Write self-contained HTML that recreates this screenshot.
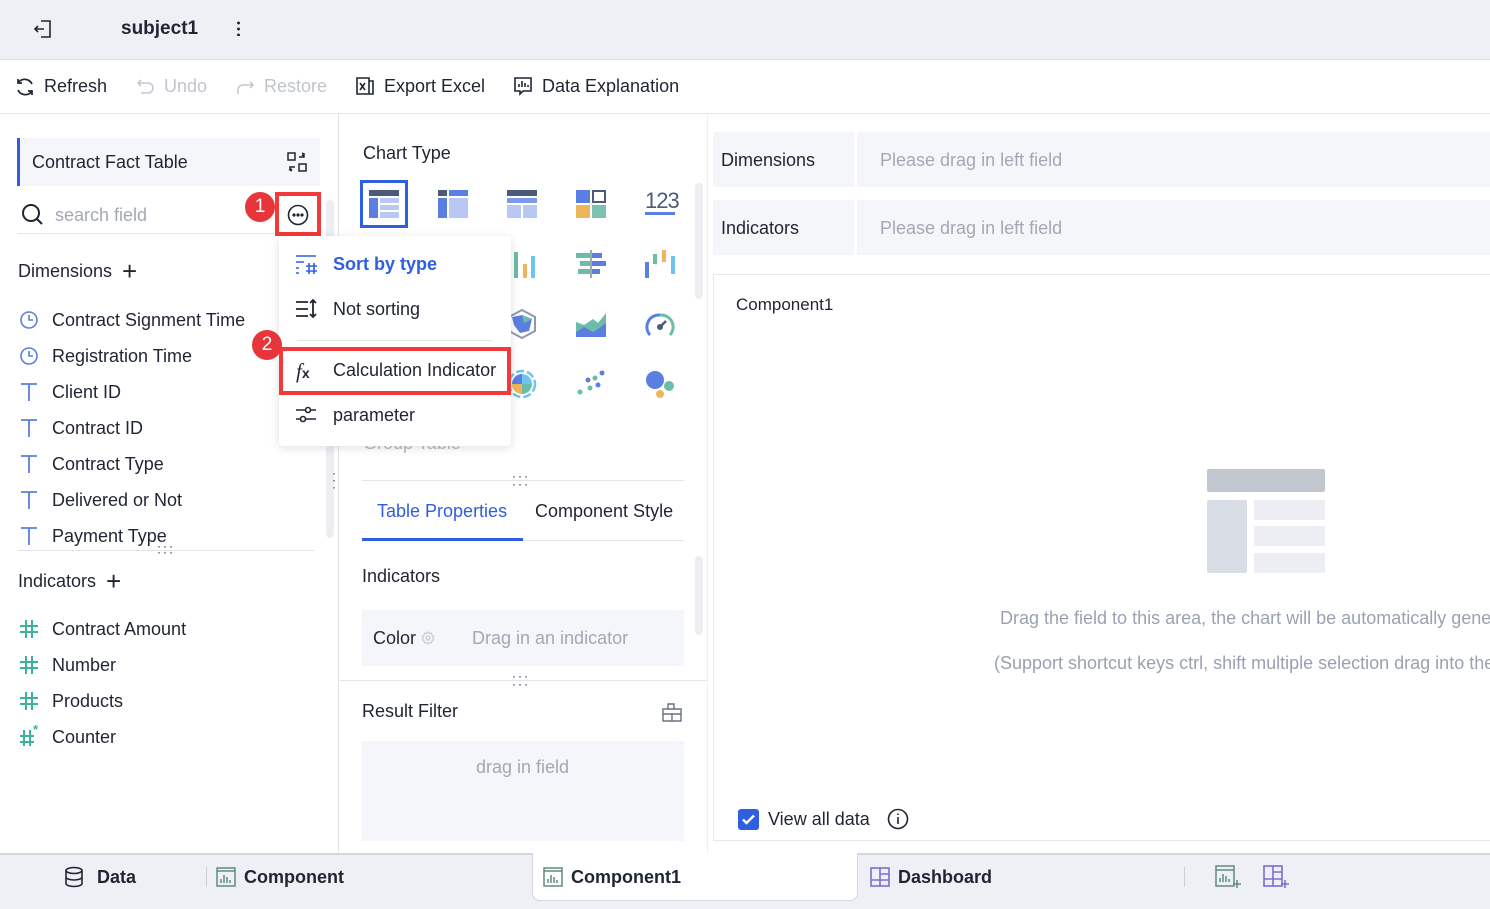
<!DOCTYPE html>
<html><head><meta charset="utf-8"><style>
*{box-sizing:border-box;margin:0;padding:0}
body{width:1490px;height:909px;overflow:hidden;position:relative;font-family:"Liberation Sans",sans-serif;color:#1f2533;background:#fff;font-size:17px}
.a{position:absolute}
.gray{color:#9aa1b0}
.ic{position:absolute;display:block}
.fld{position:absolute;left:52px;font-size:18px}
.T{position:absolute;left:19px;width:20px;height:20px}
.H{position:absolute;left:19px;color:#3bb39a;font-size:22px;font-weight:bold;line-height:22px}
</style></head><body>
<!-- top bar -->
<div class="a" style="left:0;top:0;width:1490px;height:60px;background:#eef0f5;border-bottom:1px solid #dde0e7"></div>
<svg class="ic" style="left:32px;top:18px" width="22" height="22" viewBox="0 0 22 22" fill="none" stroke="#1f2533" stroke-width="1.6"><path d="M9 3h9v16H9M3 11h9M6 8l-3 3 3 3"/></svg>
<div class="a" style="left:121px;top:18px;font-weight:bold;font-size:19px">subject1</div>
<div class="a" style="left:237px;top:20px;width:3px;height:16px;background:radial-gradient(circle,#1f2533 1.3px,transparent 1.6px) 0 0/3px 6px"></div>
<!-- toolbar -->
<div class="a" style="left:0;top:113px;width:1490px;height:1px;background:#e3e5ea"></div>
<svg class="ic" style="left:14px;top:76px" width="22" height="22" viewBox="0 0 22 22" fill="none" stroke="#1f2533" stroke-width="1.7"><path d="M18 8a8 8 0 0 0-14-1M4 14a8 8 0 0 0 14 1M4 3v4h4M18 19v-4h-4"/></svg>
<div class="a" style="left:44px;top:76px;font-size:18px">Refresh</div>
<svg class="ic" style="left:135px;top:76px" width="22" height="22" viewBox="0 0 22 22" fill="none" stroke="#c4c8d0" stroke-width="1.6"><path d="M6 4L3 7l3 3M3 7h10a5 5 0 0 1 0 10H6"/></svg>
<div class="a" style="left:164px;top:76px;font-size:18px;color:#c0c4cc">Undo</div>
<svg class="ic" style="left:234px;top:76px" width="22" height="22" viewBox="0 0 22 22" fill="none" stroke="#c4c8d0" stroke-width="1.6"><path d="M16 6l3 3-3 3M19 9H9a5 5 0 0 0-5 5v4"/></svg>
<div class="a" style="left:264px;top:76px;font-size:18px;color:#c0c4cc">Restore</div>
<svg class="ic" style="left:354px;top:75px" width="22" height="22" viewBox="0 0 22 22" fill="none" stroke="#1f2533" stroke-width="1.6"><path d="M3 3h12v16H3zM15 6h4v13h-4M6 8l5 7M11 8l-5 7"/></svg>
<div class="a" style="left:384px;top:76px;font-size:18px">Export Excel</div>
<svg class="ic" style="left:512px;top:75px" width="22" height="22" viewBox="0 0 22 22" fill="none" stroke="#1f2533" stroke-width="1.6"><path d="M3 3h16v13h-8l-3 3v-3H3zM7 12V9M10 12V6M13 12V8M16 12v-2"/></svg>
<div class="a" style="left:542px;top:76px;font-size:18px">Data Explanation</div>
<!-- left panel -->
<div class="a" style="left:338px;top:114px;width:1px;height:740px;background:#e3e5ea"></div>
<div class="a" style="left:17px;top:138px;width:303px;height:48px;background:#f5f6fa;border-left:3px solid #2f5ee0"></div>
<div class="a" style="left:32px;top:152px;font-size:18px">Contract Fact Table</div>
<svg class="ic" style="left:286px;top:151px" width="22" height="22" viewBox="0 0 22 22" fill="none" stroke="#1f2533" stroke-width="1.5"><path d="M2 2h7v7H2zM13 13h7v7h-7zM13 6h5V3M16 2l2 1-2 2M9 16H4v3M6 20l-2-1 2-1"/></svg>
<svg class="ic" style="left:21px;top:203px" width="24" height="24" viewBox="0 0 24 24" fill="none" stroke="#1f2533" stroke-width="2"><circle cx="10" cy="10" r="8"/><path d="M16 16l5 5"/></svg>
<div class="a" style="left:55px;top:205px;font-size:18px;color:#a3a8b4">search field</div>
<div class="a" style="left:17px;top:233px;width:262px;height:1px;background:#e3e5ea"></div>
<div class="a" style="left:245px;top:192px;width:30px;height:30px;border-radius:50%;background:#e8353a;color:#fff;text-align:center;line-height:30px;font-size:19px">1</div>
<div class="a" style="left:275px;top:192px;width:46px;height:44px;border:4px solid #f23a3a;background:#fff"></div>
<svg class="ic" style="left:287px;top:204px" width="22" height="22" viewBox="0 0 22 22" fill="none" stroke="#1f2533" stroke-width="1.6"><circle cx="11" cy="11" r="9.5"/><circle cx="7" cy="11" r=".8" fill="#1f2533"/><circle cx="11" cy="11" r=".8" fill="#1f2533"/><circle cx="15" cy="11" r=".8" fill="#1f2533"/></svg>
<div class="a" style="left:18px;top:261px;font-size:18px">Dimensions</div>
<div class="a" style="left:122px;top:256px;font-size:26px;font-weight:300">+</div>
<svg class="T" style="top:310px" viewBox="0 0 20 20" fill="none" stroke="#5a7fe0" stroke-width="1.6"><circle cx="10" cy="10" r="8"/><path d="M10 5v5h4"/></svg>
<svg class="T" style="top:346px" viewBox="0 0 20 20" fill="none" stroke="#5a7fe0" stroke-width="1.6"><circle cx="10" cy="10" r="8"/><path d="M10 5v5h4"/></svg>
<svg class="T" style="top:382px" viewBox="0 0 20 20" fill="none" stroke="#5a7fe0" stroke-width="1.8"><path d="M2 2h16M10 2v17"/></svg>
<svg class="T" style="top:418px" viewBox="0 0 20 20" fill="none" stroke="#5a7fe0" stroke-width="1.8"><path d="M2 2h16M10 2v17"/></svg>
<svg class="T" style="top:454px" viewBox="0 0 20 20" fill="none" stroke="#5a7fe0" stroke-width="1.8"><path d="M2 2h16M10 2v17"/></svg>
<svg class="T" style="top:490px" viewBox="0 0 20 20" fill="none" stroke="#5a7fe0" stroke-width="1.8"><path d="M2 2h16M10 2v17"/></svg>
<svg class="T" style="top:526px" viewBox="0 0 20 20" fill="none" stroke="#5a7fe0" stroke-width="1.8"><path d="M2 2h16M10 2v17"/></svg>
<div class="fld" style="top:310px">Contract Signment Time</div>
<div class="fld" style="top:346px">Registration Time</div>
<div class="fld" style="top:382px">Client ID</div>
<div class="fld" style="top:418px">Contract ID</div>
<div class="fld" style="top:454px">Contract Type</div>
<div class="fld" style="top:490px">Delivered or Not</div>
<div class="fld" style="top:526px">Payment Type</div>
<div class="a" style="left:18px;top:550px;width:296px;height:1px;background:#e3e5ea"></div>
<div class="a" style="left:157px;top:543px;font-size:12px;letter-spacing:2px;line-height:6px">···<br>···</div>
<div class="a" style="left:326px;top:200px;width:8px;height:338px;background:#eceef2;border-radius:4px"></div>
<div class="a" style="left:18px;top:571px;font-size:18px">Indicators</div>
<div class="a" style="left:106px;top:566px;font-size:26px;font-weight:300">+</div>
<svg class="T" style="top:619px" viewBox="0 0 20 20" fill="none" stroke="#3bb39a" stroke-width="2"><path d="M1 7h18M1 13h18M7 1v18M13 1v18"/></svg>
<svg class="T" style="top:655px" viewBox="0 0 20 20" fill="none" stroke="#3bb39a" stroke-width="2"><path d="M1 7h18M1 13h18M7 1v18M13 1v18"/></svg>
<svg class="T" style="top:691px" viewBox="0 0 20 20" fill="none" stroke="#3bb39a" stroke-width="2"><path d="M1 7h18M1 13h18M7 1v18M13 1v18"/></svg>
<svg class="T" style="top:727px" viewBox="0 0 20 20" fill="none" stroke="#3bb39a" stroke-width="2"><path d="M1 9h14M1 15h14M5 3v16M11 3v16"/></svg>
<div class="a" style="left:33px;top:722px;color:#3bb39a;font-size:13px;font-weight:bold">*</div>
<div class="fld" style="top:619px">Contract Amount</div>
<div class="fld" style="top:655px">Number</div>
<div class="fld" style="top:691px">Products</div>
<div class="fld" style="top:727px">Counter</div>
<div class="a" style="left:332px;top:470px;font-size:12px;line-height:7px">·<br>·<br>·</div>
<!-- middle panel -->
<div class="a" style="left:363px;top:143px;font-size:18px">Chart Type</div>
<div class="a" style="left:360px;top:180px;width:48px;height:48px;border:3px solid #2f5ee0"></div>
<svg class="ic" style="left:369px;top:190px" width="30" height="28"><rect x="0" y="0" width="30" height="6" fill="#4b5a78"/><rect x="0" y="8" width="9" height="20" fill="#5b7fe0"/><rect x="11" y="8" width="19" height="5" fill="#b9c8f2"/><rect x="11" y="15" width="19" height="5" fill="#b9c8f2"/><rect x="11" y="22" width="19" height="6" fill="#b9c8f2"/></svg>
<svg class="ic" style="left:438px;top:190px" width="30" height="28"><rect x="0" y="0" width="9" height="6" fill="#4b5a78"/><rect x="11" y="0" width="19" height="6" fill="#5b7fe0"/><rect x="0" y="8" width="9" height="20" fill="#5b7fe0"/><rect x="11" y="8" width="19" height="20" fill="#b9c8f2"/></svg>
<svg class="ic" style="left:507px;top:190px" width="30" height="28"><rect x="0" y="0" width="30" height="6" fill="#4b5a78"/><rect x="0" y="8" width="30" height="5" fill="#7c9ae8"/><rect x="0" y="15" width="14" height="13" fill="#b9c8f2"/><rect x="16" y="15" width="14" height="13" fill="#b9c8f2"/></svg>
<svg class="ic" style="left:576px;top:190px" width="30" height="28"><rect x="0" y="0" width="14" height="13" fill="#5b7fe0"/><rect x="17" y="1" width="12" height="11" fill="#fff" stroke="#4b5a78" stroke-width="2"/><rect x="0" y="15" width="14" height="13" fill="#efb55a"/><rect x="16" y="15" width="14" height="13" fill="#7cc2b3"/></svg>
<div class="a" style="left:645px;top:188px;font-size:22px;color:#4b5a78;letter-spacing:-1px">123</div>
<div class="a" style="left:645px;top:212px;width:30px;height:3px;background:#5b7fe0"></div>
<!-- col3 partially hidden -->
<svg class="ic" style="left:500px;top:250px" width="40" height="28"><rect x="2" y="12" width="4" height="16" fill="#5b7fe0"/><rect x="14" y="2" width="4" height="26" fill="#6cbcab"/><rect x="23" y="14" width="4" height="14" fill="#efb55a"/><rect x="31" y="6" width="4" height="22" fill="#6cc4f0"/></svg>
<svg class="ic" style="left:507px;top:309px" width="30" height="30"><path d="M15 1l13 7v14l-13 7-13-7V8z" fill="none" stroke="#8e99ac" stroke-width="2"/><path d="M15 6l10 4-3 12-9 2-6-8-2-8z" fill="#5b7fe0"/><path d="M15 6l10 4-8 4z" fill="#6cbcab"/></svg>
<svg class="ic" style="left:507px;top:369px" width="30" height="30"><circle cx="15" cy="15" r="13" fill="none" stroke="#6cc4f0" stroke-width="2.5" stroke-dasharray="8 3"/><path d="M15 15V5a10 10 0 0 1 10 10z" fill="#6cc4f0"/><path d="M15 15h10a10 10 0 0 1-10 10z" fill="#6cbcab"/><path d="M15 15v10A10 10 0 0 1 5 15z" fill="#efb55a"/><path d="M15 15H5A10 10 0 0 1 15 5z" fill="#5b7fe0"/></svg>
<svg class="ic" style="left:576px;top:250px" width="30" height="28"><rect x="14" y="0" width="2" height="28" fill="#9aa"/><rect x="0" y="3" width="14" height="5" fill="#6cbcab"/><rect x="16" y="3" width="10" height="5" fill="#5b7fe0"/><rect x="4" y="11" width="10" height="5" fill="#6cbcab"/><rect x="16" y="11" width="14" height="5" fill="#5b7fe0"/><rect x="2" y="19" width="12" height="5" fill="#6cbcab"/><rect x="16" y="19" width="8" height="5" fill="#5b7fe0"/></svg>
<svg class="ic" style="left:645px;top:250px" width="30" height="28"><rect x="0" y="12" width="4" height="16" fill="#5b7fe0"/><rect x="8" y="4" width="4" height="10" fill="#6cbcab"/><rect x="17" y="0" width="4" height="12" fill="#efb55a"/><rect x="26" y="6" width="4" height="18" fill="#6cc4f0"/></svg>
<svg class="ic" style="left:576px;top:312px" width="30" height="26"><path d="M0 10l8 3 9-6 5 4 8-10v14l-8 8-5-3-9 5L0 20z" fill="#6cbcab"/><path d="M0 20l8-5 9 5 5-3 8-6v14H0z" fill="#5b7fe0"/></svg>
<svg class="ic" style="left:645px;top:311px" width="30" height="28" fill="none"><path d="M5 24A12 12 0 0 1 15 4" stroke="#5b7fe0" stroke-width="3"/><path d="M15 4a12 12 0 0 1 10 20" stroke="#6cbcab" stroke-width="3"/><circle cx="15" cy="16" r="3" fill="#4b5a78"/><path d="M15 16l6-6" stroke="#4b5a78" stroke-width="2.5"/></svg>
<svg class="ic" style="left:576px;top:370px" width="30" height="28"><circle cx="26" cy="3" r="2.5" fill="#5b7fe0"/><circle cx="19" cy="8" r="2.5" fill="#6cbcab"/><circle cx="12" cy="10" r="2.5" fill="#5b7fe0"/><circle cx="22" cy="15" r="2.5" fill="#5b7fe0"/><circle cx="14" cy="18" r="2.5" fill="#6cbcab"/><circle cx="4" cy="22" r="2.5" fill="#6cbcab"/></svg>
<svg class="ic" style="left:645px;top:370px" width="30" height="30"><circle cx="10" cy="10" r="9" fill="#5b7fe0"/><circle cx="24" cy="16" r="5" fill="#6cbcab"/><circle cx="15" cy="24" r="4" fill="#efb55a"/></svg>
<div class="a" style="left:695px;top:183px;width:8px;height:116px;background:#eceef2;border-radius:4px"></div>
<div class="a" style="left:363px;top:433px;font-size:18px;color:#b8bcc6">Group Table</div>
<div class="a" style="left:362px;top:480px;width:322px;height:1px;background:#e3e5ea"></div>
<div class="a" style="left:512px;top:472px;font-size:12px;letter-spacing:2px;line-height:8px">···<br>···</div>
<div class="a" style="left:377px;top:501px;font-size:18px;color:#2f5ee0">Table Properties</div>
<div class="a" style="left:535px;top:501px;font-size:18px">Component Style</div>
<div class="a" style="left:362px;top:540px;width:322px;height:1px;background:#e3e5ea"></div>
<div class="a" style="left:362px;top:538px;width:161px;height:3px;background:#2f5ee0"></div>
<div class="a" style="left:362px;top:566px;font-size:18px">Indicators</div>
<div class="a" style="left:695px;top:556px;width:8px;height:79px;background:#eceef2;border-radius:4px"></div>
<div class="a" style="left:362px;top:610px;width:322px;height:56px;background:#f5f6fa"></div>
<div class="a" style="left:373px;top:628px;font-size:18px">Color</div>
<svg class="ic" style="left:421px;top:631px" width="14" height="14" viewBox="0 0 14 14" fill="none" stroke="#c6cad3" stroke-width="1.2"><circle cx="7" cy="7" r="2"/><path d="M7 1l1.5 1.5 2-.3.5 2 1.7 1.2-1 1.6 1 1.6L11 9.8l-.5 2-2-.3L7 13l-1.5-1.5-2 .3-.5-2L1.3 8.6l1-1.6-1-1.6L3 4.2l.5-2 2 .3z"/></svg>
<div class="a" style="left:472px;top:628px;font-size:18px;color:#a3a8b4">Drag in an indicator</div>
<div class="a" style="left:340px;top:680px;width:368px;height:1px;background:#e3e5ea"></div>
<div class="a" style="left:512px;top:672px;font-size:12px;letter-spacing:2px;line-height:8px">···<br>···</div>
<div class="a" style="left:362px;top:701px;font-size:18px">Result Filter</div>
<svg class="ic" style="left:662px;top:702px" width="20" height="20" viewBox="0 0 20 20" fill="none" stroke="#6a7080" stroke-width="1.4"><path d="M1 7h18v12H1zM6 7V2h6v5M1 12h18M10 12v7"/></svg>
<div class="a" style="left:362px;top:741px;width:322px;height:100px;background:#f5f6fa"></div>
<div class="a" style="left:476px;top:757px;font-size:18px;color:#a3a8b4">drag in field</div>
<div class="a" style="left:707px;top:114px;width:1px;height:740px;background:#eef0f3"></div>
<!-- popup menu -->
<div class="a" style="left:279px;top:236px;width:232px;height:210px;background:#fff;border-radius:4px;box-shadow:0 2px 10px rgba(0,0,0,.13)"></div>
<svg class="ic" style="left:296px;top:254px" width="22" height="20" viewBox="0 0 22 20" fill="none" stroke="#2f5ee0" stroke-width="1.6"><path d="M0 2h20M0 8h8M0 14h3M0 19h3M10 12h11M10 17h11M13 9v11M18 9v11"/></svg>
<div class="a" style="left:333px;top:254px;font-size:18px;font-weight:bold;color:#2f5ee0">Sort by type</div>
<svg class="ic" style="left:296px;top:299px" width="22" height="20" viewBox="0 0 22 20" fill="none" stroke="#1f2533" stroke-width="1.8"><path d="M0 3h12M0 10h12M0 17h12M17 1v17M14 4l3-3 3 3M14 15l3 3 3-3"/></svg>
<div class="a" style="left:333px;top:299px;font-size:18px">Not sorting</div>
<div class="a" style="left:297px;top:340px;width:196px;height:1px;background:#e3e5ea"></div>
<div class="a" style="left:279px;top:347px;width:232px;height:48px;border:4px solid #f23a3a"></div>
<div class="a" style="left:252px;top:330px;width:30px;height:30px;border-radius:50%;background:#e8353a;color:#fff;text-align:center;line-height:30px;font-size:19px">2</div>
<div class="a" style="left:296px;top:359px;font-family:'Liberation Serif',serif;font-style:italic;font-size:21px">f<span style="font-size:14px;font-style:normal;font-family:'Liberation Sans';font-weight:bold">x</span></div>
<div class="a" style="left:333px;top:360px;font-size:18px">Calculation Indicator</div>
<svg class="ic" style="left:296px;top:406px" width="20" height="18" viewBox="0 0 20 18" fill="none" stroke="#1f2533" stroke-width="1.6"><path d="M0 4h20M0 13h20"/><circle cx="12" cy="4" r="2.5" fill="#fff"/><circle cx="7" cy="13" r="2.5" fill="#fff"/></svg>
<div class="a" style="left:333px;top:405px;font-size:18px">parameter</div>
<!-- right area -->
<div class="a" style="left:713px;top:132px;width:777px;height:55px;background:#f5f6fa"></div>
<div class="a" style="left:854px;top:132px;width:3px;height:55px;background:#fff"></div>
<div class="a" style="left:721px;top:150px;font-size:18px">Dimensions</div>
<div class="a" style="left:880px;top:150px;font-size:18px;color:#a3a8b4">Please drag in left field</div>
<div class="a" style="left:713px;top:200px;width:777px;height:55px;background:#f5f6fa"></div>
<div class="a" style="left:854px;top:200px;width:3px;height:55px;background:#fff"></div>
<div class="a" style="left:721px;top:218px;font-size:18px">Indicators</div>
<div class="a" style="left:880px;top:218px;font-size:18px;color:#a3a8b4">Please drag in left field</div>
<div class="a" style="left:713px;top:274px;width:800px;height:567px;border:1px solid #e6e8ee"></div>
<div class="a" style="left:736px;top:295px;font-size:17px">Component1</div>
<div class="a" style="left:1207px;top:469px;width:118px;height:23px;background:#c1c6cf;border-radius:2px"></div>
<div class="a" style="left:1207px;top:500px;width:40px;height:73px;background:#d9dde5;border-radius:2px"></div>
<div class="a" style="left:1254px;top:500px;width:71px;height:20px;background:#eceef3"></div>
<div class="a" style="left:1254px;top:526px;width:71px;height:20px;background:#eceef3"></div>
<div class="a" style="left:1254px;top:553px;width:71px;height:20px;background:#eceef3"></div>
<div class="a" style="left:1000px;top:608px;font-size:18px;color:#9aa1b0;white-space:nowrap">Drag the field to this area, the chart will be automatically generated</div>
<div class="a" style="left:994px;top:653px;font-size:18px;color:#9aa1b0;white-space:nowrap">(Support shortcut keys ctrl, shift multiple selection drag into the area)</div>
<div class="a" style="left:738px;top:809px;width:21px;height:21px;background:#2f5ee0;border-radius:3px"></div>
<svg class="ic" style="left:741px;top:812px" width="15" height="15" viewBox="0 0 15 15" fill="none" stroke="#fff" stroke-width="2.4"><path d="M2 7.5l3.5 3.5L13 3.5"/></svg>
<div class="a" style="left:768px;top:809px;font-size:18px">View all data</div>
<svg class="ic" style="left:887px;top:808px" width="22" height="22" viewBox="0 0 22 22" fill="none" stroke="#1f2533" stroke-width="1.6"><circle cx="11" cy="11" r="9.5"/><path d="M11 9v7M11 5.5v1.5"/></svg>
<!-- bottom bar -->
<div class="a" style="left:0;top:853px;width:1490px;height:56px;background:#eef0f5;border-top:2px solid #d4d7de"></div>
<div class="a" style="left:532px;top:853px;width:326px;height:48px;background:#fff;border:1px solid #d4d7de;border-top:none;border-radius:0 0 8px 8px"></div>
<svg class="ic" style="left:64px;top:866px" width="20" height="22" viewBox="0 0 20 22" fill="none" stroke="#1f2533" stroke-width="1.6"><ellipse cx="10" cy="4.5" rx="8" ry="3"/><path d="M2 4.5v13c0 1.7 3.6 3 8 3s8-1.3 8-3v-13M2 11c0 1.7 3.6 3 8 3s8-1.3 8-3"/></svg>
<div class="a" style="left:97px;top:867px;font-size:18px;font-weight:bold">Data</div>
<div class="a" style="left:206px;top:867px;width:1px;height:20px;background:#ccd0d8"></div>
<svg class="ic" style="left:216px;top:867px" width="20" height="20" viewBox="0 0 20 20" fill="none" stroke="#5e8c80" stroke-width="1.5"><rect x="1" y="1" width="18" height="18"/><path d="M1 4h18M5 16v-4M8 16V8M11 16v-6M14 16v-3"/></svg>
<div class="a" style="left:244px;top:867px;font-size:18px;font-weight:bold">Component</div>
<svg class="ic" style="left:543px;top:867px" width="20" height="20" viewBox="0 0 20 20" fill="none" stroke="#5e8c80" stroke-width="1.5"><rect x="1" y="1" width="18" height="18"/><path d="M1 4h18M5 16v-4M8 16V8M11 16v-6M14 16v-3"/></svg>
<div class="a" style="left:571px;top:867px;font-size:18px;font-weight:bold">Component1</div>
<svg class="ic" style="left:870px;top:867px" width="20" height="20" viewBox="0 0 20 20" fill="none" stroke="#7c6fd0" stroke-width="1.6"><rect x="1" y="1" width="18" height="18"/><path d="M10 1v18M10 7h9M1 13h18"/></svg>
<div class="a" style="left:898px;top:867px;font-size:18px;font-weight:bold">Dashboard</div>
<div class="a" style="left:1184px;top:867px;width:1px;height:20px;background:#ccd0d8"></div>
<svg class="ic" style="left:1215px;top:865px" width="26" height="24" viewBox="0 0 26 24" fill="none" stroke="#5e8c80" stroke-width="1.5"><rect x="1" y="1" width="18" height="20"/><path d="M1 5h18M5 17v-4M8 17V9M11 17v-6M14 17v-3M22 15v8M18 19h8"/></svg>
<svg class="ic" style="left:1263px;top:865px" width="26" height="24" viewBox="0 0 26 24" fill="none" stroke="#7c6fd0" stroke-width="1.6"><rect x="1" y="1" width="18" height="20"/><path d="M10 1v20M10 7h9M1 14h18M22 15v8M18 19h8"/></svg>
</body></html>
